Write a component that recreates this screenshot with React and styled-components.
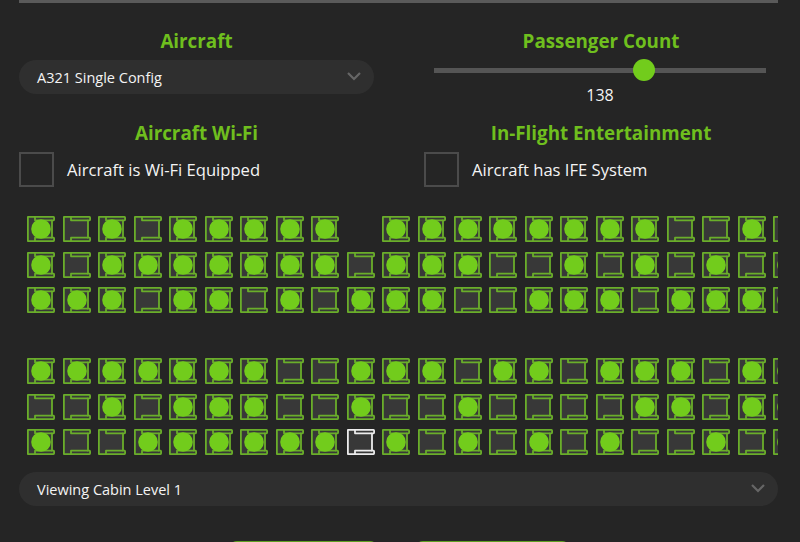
import React from "react";
import styled, { createGlobalStyle } from "styled-components";

const GREEN = "#6fbf1e";
const SEAT_GREEN = "#6aae2a";

const GlobalStyle = createGlobalStyle`
  html, body {
    margin: 0;
    padding: 0;
    background: #252525;
  }
`;

const Page = styled.div`
  width: 800px;
  height: 542px;
  overflow: hidden;
  box-sizing: border-box;
  padding: 0 22px 0 19px;
  background: #252525;
  color: #f4f4f4;
  font-family: "Open Sans", "Noto Sans", sans-serif;
`;

const TopRule = styled.div`
  height: 3px;
  background: #5a5a5a;
`;

const FormGrid = styled.div`
  display: grid;
  grid-template-columns: 355px 354px;
  column-gap: 50px;
  padding-top: 26px;
`;

const Field = styled.div`
  display: flex;
  flex-direction: column;
  height: ${(p) => p.$height}px;
`;

const Heading = styled.div`
  font-size: 18.8px;
  font-weight: 700;
  line-height: 25px;
  text-align: center;
  color: ${GREEN};
  margin-bottom: 6px;
`;

const DropdownBox = styled.div`
  display: flex;
  align-items: center;
  justify-content: space-between;
  height: 34px;
  padding: 0 13px 0 18px;
  border-radius: 17px;
  background: #2f2f2f;
  font-size: 14.5px;
`;

const Chevron = styled.svg`
  width: 14px;
  height: 9px;
  margin-top: -1px;
  fill: none;
  stroke: #666;
  stroke-width: 2.2;
`;

const SliderWrap = styled.div`
  padding: 0 12px 0 10px;
`;

const SliderTrack = styled.div`
  position: relative;
  height: 5px;
  margin-top: 8px;
  background: #555;
`;

const SliderThumb = styled.div`
  position: absolute;
  top: -9px;
  width: 22px;
  height: 22px;
  margin-left: -11px;
  border-radius: 50%;
  background: #72cc1c;
`;

const SliderValue = styled.div`
  margin-top: 11px;
  font-size: 16px;
  line-height: 22px;
  text-align: center;
`;

const CheckRow = styled.div`
  display: flex;
  align-items: center;
  gap: 13px;
  font-size: 16.6px;
`;

const CheckBox = styled.div`
  box-sizing: border-box;
  width: 35px;
  height: 35px;
  border: 2.5px solid #4b4b4b;
`;

const SeatMap = styled.div`
  display: grid;
  grid-template-columns: repeat(22, 35.55px);
  grid-auto-rows: 35.55px;
  width: 751px;
  height: 249px;
  margin: 29px 0 0 8px;
  overflow: hidden;
`;

const SeatSvg = styled.svg`
  display: block;
  width: 28px;
  height: 26px;
  visibility: ${(p) => (p.$gone ? "hidden" : "visible")};
  fill: none;
  stroke: ${(p) => (p.$selected ? "#ececec" : SEAT_GREEN)};
  stroke-width: 1.8;
  stroke-linejoin: round;
`;

const WideDropdown = styled(DropdownBox)`
  margin-top: 7px;
`;

const ButtonRow = styled.div`
  display: flex;
  justify-content: center;
  gap: 37px;
  margin-top: 34.5px;
  padding-left: 2px;
`;

const ActionButton = styled.div`
  width: ${(p) => p.$width}px;
  height: 36px;
  border-radius: 8px;
  background: #5f9f22;
`;

// f = taken, e = free, s = selected, . = no seat
const SEAT_ROWS = [
  "fefefffff.ffffffffeefe",
  "fefffffffefffeefefefef",
  "fffeffefefffeefffeffff",
  "",
  "fffffffeefffeffefffeff",
  "eefefffeefeefeeeeffeff",
  "feeffffffsfefefefeefef",
];

const Seat = ({ type }) => (
  <SeatSvg viewBox="0 0 28 26" $gone={type === "."} $selected={type === "s"}>
    <path
      d="M.9.9H26.4a.8.8 0 0 1 .7.8V3.5a.8.8 0 0 1-.7.8H25V21.7H26.4a.8.8 0 0 1 .7.8V24.3a.8.8 0 0 1-.7.8H.9Z"
      fill="#383838"
    />
    <path d="M8 .9V4.3H25M8 25.1V21.7H25" />
    {type === "f" && <circle cx="14" cy="13" r="9.8" fill="#72cc1c" stroke="none" />}
  </SeatSvg>
);

const DownArrow = () => (
  <Chevron viewBox="0 0 14 9">
    <path d="M1 1l6 6 6-6" />
  </Chevron>
);

const App = () => (
  <Page>
    <GlobalStyle />
    <TopRule />
    <FormGrid>
      <Field $height={92}>
        <Heading>Aircraft</Heading>
        <DropdownBox>
          A321 Single Config
          <DownArrow />
        </DropdownBox>
      </Field>
      <Field $height={92}>
        <Heading>Passenger Count</Heading>
        <SliderWrap>
          <SliderTrack>
            <SliderThumb style={{ left: `${(210 / 332) * 100}%` }} />
          </SliderTrack>
          <SliderValue>138</SliderValue>
        </SliderWrap>
      </Field>
      <Field>
        <Heading>Aircraft Wi-Fi</Heading>
        <CheckRow>
          <CheckBox />
          Aircraft is Wi-Fi Equipped
        </CheckRow>
      </Field>
      <Field>
        <Heading>In-Flight Entertainment</Heading>
        <CheckRow>
          <CheckBox />
          Aircraft has IFE System
        </CheckRow>
      </Field>
    </FormGrid>
    <SeatMap>
      {SEAT_ROWS.map((row, r) =>
        row
          ? row.split("").map((type, c) => <Seat key={`${r}-${c}`} type={type} />)
          : Array.from({ length: 22 }, (_, c) => <div key={`${r}-${c}`} />)
      )}
    </SeatMap>
    <WideDropdown>
      Viewing Cabin Level 1
      <DownArrow />
    </WideDropdown>
    <ButtonRow>
      <ActionButton $width={149} />
      <ActionButton $width={155} />
    </ButtonRow>
  </Page>
);

export default App;
